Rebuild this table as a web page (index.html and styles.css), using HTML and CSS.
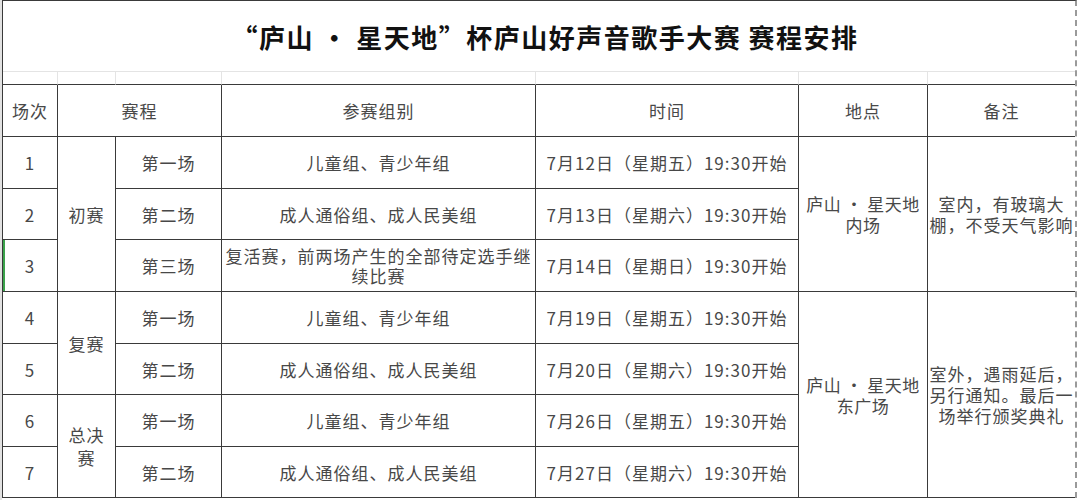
FILE: index.html
```html
<!DOCTYPE html>
<html lang="zh-CN">
<head>
<meta charset="utf-8">
<title>赛程安排</title>
<link rel="stylesheet" href="styles.css">
</head>
<body>
<div class="sheet">
  <table class="schedule">
    <colgroup>
      <col class="c1"><col class="c2"><col class="c3"><col class="c4"><col class="c5"><col class="c6"><col class="c7">
    </colgroup>
    <tbody>
      <tr class="r-title"><td class="title last" colspan="7">“庐山 • 星天地”杯庐山好声音歌手大赛 赛程安排</td></tr>
      <tr class="r-gap"><td></td><td></td><td></td><td></td><td></td><td></td><td class="last"></td></tr>
      <tr class="r-h52">
        <td>场次</td><td colspan="2">赛程</td><td>参赛组别</td><td>时间</td><td>地点</td><td class="last">备注</td>
      </tr>
      <tr class="r-h52">
        <td>1</td><td rowspan="3">初赛</td><td>第一场</td><td>儿童组、青少年组</td><td>7月12日（星期五）19:30开始</td>
        <td rowspan="3" class="place">庐山 · 星天地<br>内场</td>
        <td rowspan="3" class="note last">室内，有玻璃大<br>棚，不受天气影响</td>
      </tr>
      <tr class="r-h51">
        <td>2</td><td>第二场</td><td>成人通俗组、成人民美组</td><td>7月13日（星期六）19:30开始</td>
      </tr>
      <tr class="r-h52">
        <td class="marked">3</td><td>第三场</td><td class="wrap">复活赛，前两场产生的全部待定选手继续比赛</td><td>7月14日（星期日）19:30开始</td>
      </tr>
      <tr class="r-h52">
        <td>4</td><td rowspan="2">复赛</td><td>第一场</td><td>儿童组、青少年组</td><td>7月19日（星期五）19:30开始</td>
        <td rowspan="4" class="place">庐山 · 星天地<br>东广场</td>
        <td rowspan="4" class="note last">室外，遇雨延后，<br>另行通知。最后一<br>场举行颁奖典礼</td>
      </tr>
      <tr class="r-h51">
        <td>5</td><td>第二场</td><td>成人通俗组、成人民美组</td><td>7月20日（星期六）19:30开始</td>
      </tr>
      <tr class="r-h52">
        <td>6</td><td rowspan="2" class="final">总决<br>赛</td><td>第一场</td><td>儿童组、青少年组</td><td>7月26日（星期五）19:30开始</td>
      </tr>
      <tr class="r-h51">
        <td>7</td><td>第二场</td><td>成人通俗组、成人民美组</td><td>7月27日（星期六）19:30开始</td>
      </tr>
    </tbody>
  </table>
</div>
</body>
</html>
```
FILE: styles.css
```css
html, body {
  margin: 0;
  padding: 0;
  background: #ffffff;
}

.sheet {
  width: 1080px;
  height: 500px;
  border-left: 2px solid #e2e2e2;
  box-sizing: border-box;
  overflow: hidden;
}

.schedule {
  border-collapse: separate;
  border-spacing: 0;
  table-layout: fixed;
  width: 1075px;
  border-top: 1px solid #3a3a3a;
  border-left: 1px solid #3a3a3a;
  border-right: 2px dashed #9a9a9a;
  font-family: "Noto Sans CJK SC", "Noto Sans", sans-serif;
  font-size: 17px;
  letter-spacing: 1px;
  line-height: 21px;
  color: #484848;
}

.c1 { width: 55px; }
.c2 { width: 58px; }
.c3 { width: 106px; }
.c4 { width: 314px; }
.c5 { width: 263px; }
.c6 { width: 129px; }
.c7 { width: 147px; }

.schedule td {
  box-sizing: border-box;
  padding: 0;
  text-align: center;
  vertical-align: middle;
  border-right: 1px solid #3a3a3a;
  border-bottom: 1px solid #3a3a3a;
  overflow: hidden;
}

.schedule td.last {
  border-right: none;
}

.r-title { height: 71px; }
.r-gap { height: 13px; }
.r-h52 { height: 52px; }
.r-h51 { height: 51px; }

.schedule .title {
  border-bottom: 1px solid #e4e4e4;
  font-family: "Noto Sans CJK SC", sans-serif;
  font-size: 26px;
  font-weight: 700;
  letter-spacing: 1.5px;
  color: #111111;
  padding-left: 12px;
}

.r-gap td {
  border-right: 1px solid #e4e4e4;
}

.schedule .wrap {
  padding: 0 2px;
  line-height: 20px;
}

.schedule .place {
  letter-spacing: 0.5px;
}

.schedule .note {
  white-space: nowrap;
}

.schedule .final {
  line-height: 23px;
}

.schedule .marked {
  box-shadow: inset 2px 0 0 #3aa24a;
}
```
